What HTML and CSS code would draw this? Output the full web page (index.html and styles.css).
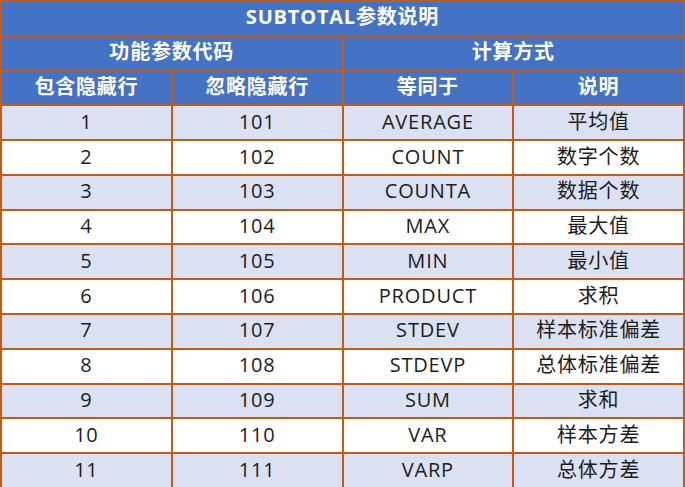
FILE: index.html
```html
<!DOCTYPE html>
<html lang="zh-CN">
<head>
<meta charset="utf-8">
<title>SUBTOTAL参数说明</title>
<link rel="stylesheet" href="styles.css">
</head>
<body>
<table class="sheet">
  <colgroup><col><col><col><col></colgroup>
  <tr class="head"><th colspan="4">SUBTOTAL参数说明</th></tr>
  <tr class="head"><th colspan="2">功能参数代码</th><th colspan="2">计算方式</th></tr>
  <tr class="head"><th>包含隐藏行</th><th>忽略隐藏行</th><th>等同于</th><th>说明</th></tr>
  <tr class="odd"><td>1</td><td>101</td><td>AVERAGE</td><td>平均值</td></tr>
  <tr class="even"><td>2</td><td>102</td><td>COUNT</td><td>数字个数</td></tr>
  <tr class="odd"><td>3</td><td>103</td><td>COUNTA</td><td>数据个数</td></tr>
  <tr class="even"><td>4</td><td>104</td><td>MAX</td><td>最大值</td></tr>
  <tr class="odd"><td>5</td><td>105</td><td>MIN</td><td>最小值</td></tr>
  <tr class="even"><td>6</td><td>106</td><td>PRODUCT</td><td>求积</td></tr>
  <tr class="odd"><td>7</td><td>107</td><td>STDEV</td><td>样本标准偏差</td></tr>
  <tr class="even"><td>8</td><td>108</td><td>STDEVP</td><td>总体标准偏差</td></tr>
  <tr class="odd"><td>9</td><td>109</td><td>SUM</td><td>求和</td></tr>
  <tr class="even"><td>10</td><td>110</td><td>VAR</td><td>样本方差</td></tr>
  <tr class="odd"><td>11</td><td>111</td><td>VARP</td><td>总体方差</td></tr>
</table>
</body>
</html>
```
FILE: styles.css
```css
html, body {
  margin: 0;
  padding: 0;
  background: #ffffff;
}
.sheet {
  width: 685px;
  height: 487px;
  border-collapse: collapse;
  table-layout: fixed;
  font-family: "Open Sans", "Noto Sans CJK SC", sans-serif;
  font-size: 20px;
  letter-spacing: 0.8px;
}
.sheet tr {
  height: 34.79px;
}
.sheet th,
.sheet td {
  border: 2px solid #c55a11;
  padding: 0 0 2px 0;
  text-align: center;
  vertical-align: middle;
  line-height: 1;
}
.sheet th {
  background: #4472c4;
  color: #ffffff;
  font-weight: 700;
}
.sheet td {
  color: #1c1c1c;
  font-weight: 400;
}
.odd td {
  background: #d9e1f2;
}
.even td {
  background: #ffffff;
}
```
